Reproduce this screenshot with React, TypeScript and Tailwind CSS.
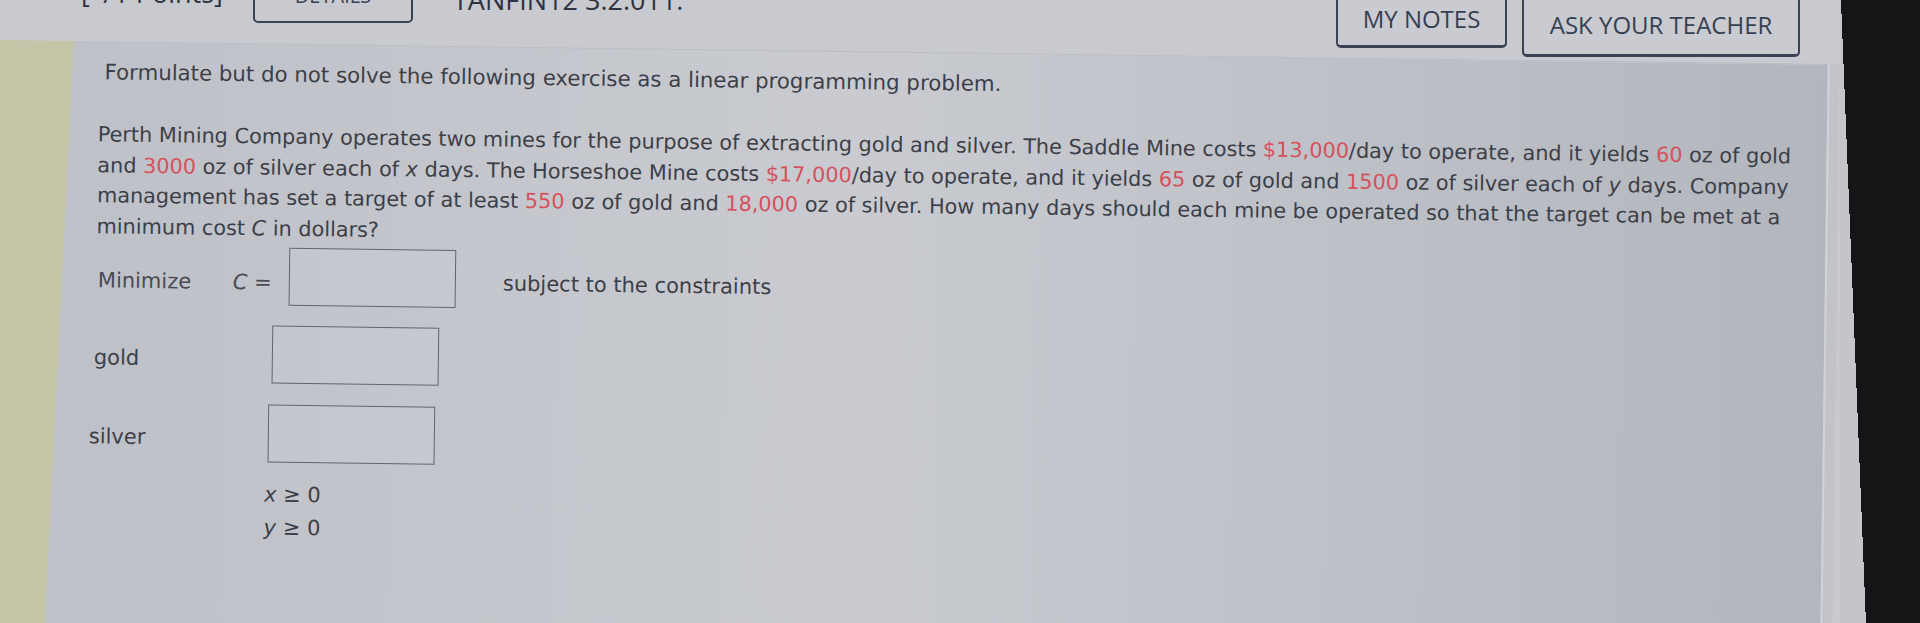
function Red({ children }: { children: React.ReactNode }) {
  return <span className="text-[#d5515d]">{children}</span>;
}

function Header() {
  return (
    <div className="relative z-10 flex h-[40px] shrink-0 items-start bg-[#c8cacf] font-['Open_Sans',sans-serif] text-[#2f3440]">
      <div className="ml-[81px] mt-[-21px] w-[172px] shrink-0 whitespace-nowrap text-[27px] leading-none">
        [–/1 Points]
      </div>
      <div className="mt-[-10px] h-[33px] w-[160px] shrink-0 rounded-b-[5px] border-2 border-[#3a4354] text-center">
        <div className="mt-[-6px] text-[20px] leading-none text-[#3a4354]">DETAILS</div>
      </div>
      <div className="ml-[40px] mt-[-14px] w-[883px] shrink-0 whitespace-nowrap text-[27px] leading-none">
        TANFIN12 3.2.011.
      </div>
      <div className="mt-[-10px] flex h-[58px] w-[171px] shrink-0 items-center justify-center rounded-b-[5px] border-2 border-b-[3px] border-[#3a4354] bg-[#c9cbd0] text-[24px] text-[#364052]">
        MY NOTES
      </div>
      <div className="ml-[15px] mt-[-10px] flex h-[67px] w-[278px] shrink-0 items-center justify-center rounded-b-[5px] border-2 border-b-[3px] border-[#3a4354] bg-[#c9cbd0] pt-[3px] text-[24px] text-[#364052]">
        ASK YOUR TEACHER
      </div>
    </div>
  );
}

function AnswerBox() {
  return <div className="h-[58px] w-[167px] shrink-0 border-[1.5px] border-[#62656d] bg-white/5" />;
}

function Panel() {
  return (
    <div className="flex-1 border-t border-[#bcbec4] bg-linear-to-r from-[#bfc1c8] via-[#c9cbd1] via-45% to-[#b3b6bd] pt-[14px] text-[21px] leading-[32px]">
      <p className="ml-[29px] whitespace-nowrap text-[21.3px]">
        Formulate but do not solve the following exercise as a linear programming problem.
      </p>

      <div className="ml-[23px] mt-[31px] whitespace-nowrap text-[20.8px] leading-[30.5px]">
        <div>
          Perth Mining Company operates two mines for the purpose of extracting gold and silver. The Saddle Mine costs{" "}
          <Red>$13,000</Red>/day to operate, and it yields <Red>60</Red> oz of gold
        </div>
        <div>
          and <Red>3000</Red> oz of silver each of <i>x</i> days. The Horseshoe Mine costs <Red>$17,000</Red>/day to
          operate, and it yields <Red>65</Red> oz of gold and <Red>1500</Red> oz of silver each of <i>y</i> days. Company
        </div>
        <div>
          management has set a target of at least <Red>550</Red> oz of gold and <Red>18,000</Red> oz of silver. How many
          days should each mine be operated so that the target can be met at a
        </div>
        <div>
          minimum cost <i>C</i> in dollars?
        </div>
      </div>

      <div className="mt-[4px] flex h-[58px] items-start">
        <span className="ml-[25px] mt-[19px] w-[135px] shrink-0 text-[#484b53]">Minimize</span>
        <span className="mt-[19px] w-[56px] shrink-0 text-[#484b53]">
          <i>C</i> =
        </span>
        <AnswerBox />
        <span className="ml-[47px] mt-[17px] whitespace-nowrap">subject to the constraints</span>
      </div>

      <div className="mt-[20px] flex h-[58px] items-start">
        <span className="ml-[22px] mt-[18px] w-[178px] shrink-0">gold</span>
        <AnswerBox />
      </div>

      <div className="mt-[21px] flex h-[58px] items-start">
        <span className="ml-[18px] mt-[18px] w-[179px] shrink-0">silver</span>
        <AnswerBox />
      </div>

      <div className="ml-[194px] mt-[16px] leading-[33px]">
        <div>
          <i>x</i> ≥ 0
        </div>
        <div>
          <i>y</i> ≥ 0
        </div>
      </div>
    </div>
  );
}

export default function App() {
  return (
    <div className="flex h-[623px] w-full overflow-hidden bg-[#141517] font-['DejaVu_Sans',sans-serif] text-[#3c3f47]">
      <div className="flex w-[1840px] shrink-0 flex-col bg-[#c8cacf]">
        <Header />
        <div className="flex h-[620px] shrink-0 origin-top-left rotate-[0.75deg]">
          {/* side strip, its edge leans with the photo */}
          <div className="w-[76px] shrink-0 bg-[linear-gradient(92.1deg,#c4c5a6_74.8%,#bfc1c8_74.8%)]" />
          <Panel />
          <div className="w-[12px] shrink-0 border-l-2 border-[#d0d2d7] bg-[#c1c3c9]" />
        </div>
      </div>
      <div className="flex-1 bg-[linear-gradient(87.7deg,#c3c5cb_24.7%,#141517_24.7%)]" />
    </div>
  );
}
